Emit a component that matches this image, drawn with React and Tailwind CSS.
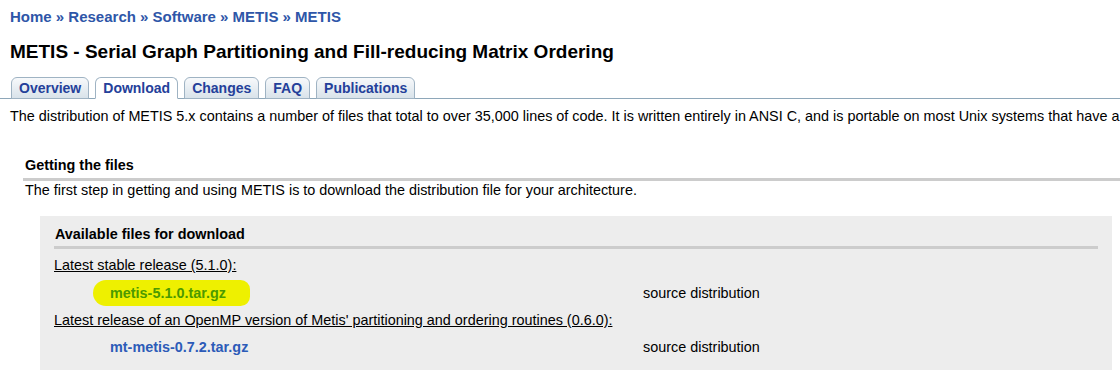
const tabs = ['Overview', 'Download', 'Changes', 'FAQ', 'Publications'];

function Tab({ label, active }) {
  return (
    <li
      className={
        'mr-[6px] -mb-px rounded-t-[6px] border border-[#9fb3c3] px-[7px] pt-[1px] pb-[1px] text-[14px] font-bold leading-[18px] text-[#24409a] ' +
        (active
          ? 'border-b-white bg-white'
          : 'bg-gradient-to-b from-[#f7f9fb] to-[#d9e3ea]')
      }
    >
      {label}
    </li>
  );
}

function FileRow({ name, highlight }) {
  return (
    <div className="flex h-[27px] items-center">
      <div className="w-[589px] pl-[56px]">
        {highlight ? (
          <span className="-ml-[17px] inline-block rounded-l-[14px] rounded-r-[10px] bg-[#eef000] py-[4px] pr-[24px] pl-[17px] font-bold text-[#4c9a00]">
            {name}
          </span>
        ) : (
          <span className="font-bold text-[#2c5bb8]">{name}</span>
        )}
      </div>
      <div>source distribution</div>
    </div>
  );
}

export default function App() {
  return (
    <div className="min-h-[371px] bg-white text-[14.4px] leading-[18px] text-black" style={{ fontFamily: '"Liberation Sans", Arial, sans-serif' }}>
      {/* Breadcrumb */}
      <div className="px-[10px] pt-[8px] text-[15px] font-bold text-[#2e56a8]">
        Home » Research » Software » METIS » METIS
      </div>

      <h1 className="px-[10px] pt-[15px] text-[19px] font-bold leading-[22px]">
        METIS - Serial Graph Partitioning and Fill-reducing Matrix Ordering
      </h1>

      {/* Tabs */}
      <ul className="mt-[14px] flex border-b border-[#8ea7b9] pl-[11px]">
        {tabs.map(t => (
          <Tab key={t} label={t} active={t === 'Download'} />
        ))}
      </ul>

      <p className="whitespace-nowrap px-[10px] pt-[8px]">
        The distribution of METIS 5.x contains a number of files that total to over 35,000 lines of code. It is written entirely in ANSI C, and is portable on most Unix systems that have a
      </p>

      {/* Getting the files */}
      <div className="pt-[31px] pl-[23px]">
        <div className="border-b-[3px] border-[#cccccc] pb-[4px] pl-[2px] font-bold">Getting the files</div>
        <div className="pl-[2px]">
          The first step in getting and using METIS is to download the distribution file for your architecture.
        </div>
      </div>

      {/* Files box */}
      <div className="mt-[17px] ml-[40px] w-[1072px] bg-[#ededed] pt-[9px] pb-[10px]">
        <div className="mx-[14px] border-b-[3px] border-[#cccccc] pb-[3px] pl-[1px] font-bold">
          Available files for download
        </div>
        <div className="px-[14px] pt-[7px]">
          <div className="h-[23px] underline">Latest stable release (5.1.0):</div>
          <FileRow name="metis-5.1.0.tar.gz" highlight />
          <div className="flex h-[27px] items-center underline">
            Latest release of an OpenMP version of Metis' partitioning and ordering routines (0.6.0):
          </div>
          <FileRow name="mt-metis-0.7.2.tar.gz" />
        </div>
      </div>
    </div>
  );
}
